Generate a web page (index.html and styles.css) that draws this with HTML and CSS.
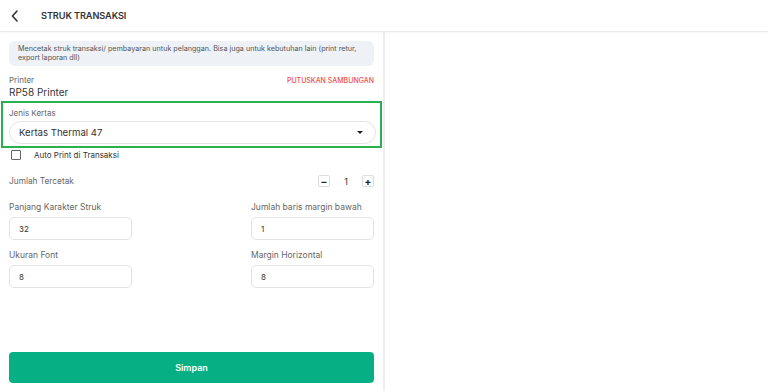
FILE: index.html
```html
<!DOCTYPE html>
<html>
<head>
<meta charset="utf-8">
<link rel="stylesheet" href="styles.css">
</head>
<body>
<header class="header">
  <svg class="back" width="10" height="12" viewBox="0 0 10 12"><path d="M7 1 L2.5 6 L7 11" fill="none" stroke="#333" stroke-width="1.6" stroke-linecap="round" stroke-linejoin="round"/></svg>
  <h1 class="title">STRUK TRANSAKSI</h1>
</header>
<main class="main">
  <section class="panel">
    <div class="info">Mencetak struk transaksi/ pembayaran untuk pelanggan. Bisa juga untuk kebutuhan lain (print retur, export laporan dll)</div>
    <div class="printer">
      <div class="printer-row">
        <span class="label">Printer</span>
        <span class="disconnect">PUTUSKAN SAMBUNGAN</span>
      </div>
      <div class="printer-name">RP58 Printer</div>
    </div>
    <div class="highlight">
      <div class="label">Jenis Kertas</div>
      <div class="select">
        <span>Kertas Thermal 47</span>
        <span class="caret"></span>
      </div>
    </div>
    <label class="check-row">
      <span class="checkbox"></span>
      <span class="check-text">Auto Print di Transaksi</span>
    </label>
    <div class="count-row">
      <span class="label">Jumlah Tercetak</span>
      <div class="stepper">
        <span class="step">&minus;</span>
        <span class="count">1</span>
        <span class="step">+</span>
      </div>
    </div>
    <div class="grid">
      <div class="field">
        <div class="label">Panjang Karakter Struk</div>
        <div class="input">32</div>
      </div>
      <div class="field">
        <div class="label">Jumlah baris margin bawah</div>
        <div class="input">1</div>
      </div>
      <div class="field">
        <div class="label">Ukuran Font</div>
        <div class="input">8</div>
      </div>
      <div class="field">
        <div class="label">Margin Horizontal</div>
        <div class="input">8</div>
      </div>
    </div>
    <button class="save">Simpan</button>
  </section>
  <section class="right"></section>
</main>
</body>
</html>
```
FILE: styles.css
```css
* { box-sizing: border-box; }
html, body { margin: 0; padding: 0; }
body {
  width: 768px;
  height: 391px;
  overflow: hidden;
  background: #fff;
  font-family: "Inter", "Noto Sans", sans-serif;
  color: #333;
}
.header {
  height: 32px;
  display: flex;
  align-items: center;
  border-bottom: 1px solid #ebebeb;
  box-shadow: 0 1px 2px rgba(0,0,0,0.04);
}
.back { margin-left: 10px; }
.title {
  margin: 0 0 0 21px;
  font-size: 9.2px;
  font-weight: 600;
  color: #333;
  letter-spacing: -0.1px;
}
.main { display: flex; height: 359px; }
.panel {
  width: 385px;
  border-right: 2px solid #eeeeee;
  padding: 9px 9px 8px 9px;
  display: flex;
  flex-direction: column;
}
.right { flex: 1; }
.info {
  background: #eef1f5;
  border-radius: 6px;
  padding: 3px 9px 4px;
  font-size: 7.2px;
  line-height: 9px;
  color: #555;
  height: 25px;
}
.printer { margin-top: 8px; }
.printer-row {
  display: flex;
  justify-content: space-between;
  align-items: center;
  height: 12px;
}
.label { font-size: 8px; color: #666; }
.disconnect { font-size: 7px; color: #f04e4e; font-weight: 500; }
.printer-name { font-size: 10px; color: #333; line-height: 12px; }
.highlight {
  margin: 3px -8px 0 -8px;
  border: 2px solid #28b14c;
  padding: 4px 4px 2px 6px;
  height: 47px;
}
.highlight .label { line-height: 12px; }
.select {
  margin-top: 2px;
  height: 23px;
  border: 1px solid #e3e3e3;
  border-radius: 12px;
  display: flex;
  align-items: center;
  justify-content: space-between;
  padding: 0 12px 0 9px;
  font-size: 9.6px;
  color: #333;
}
.caret {
  width: 0; height: 0;
  border-left: 3px solid transparent;
  border-right: 3px solid transparent;
  border-top: 3.5px solid #222;
}
.check-row {
  display: flex;
  align-items: center;
  margin-top: 1px;
  height: 12px;
}
.checkbox {
  width: 10px; height: 10px;
  border: 1px solid #666;
  border-radius: 1px;
  margin-left: 2px;
}
.check-text { font-size: 8px; color: #333; margin-left: 13px; }
.count-row {
  display: flex;
  justify-content: space-between;
  align-items: center;
  margin-top: 13px;
  height: 14px;
}
.count-row .label { font-size: 8.3px; }
.stepper { display: flex; align-items: center; }
.step {
  width: 12px; height: 12px;
  border: 1px solid #ddd;
  border-radius: 2px;
  display: flex; align-items: center; justify-content: center;
  font-size: 10px; font-weight: 700; color: #222;
  line-height: 1;
}
.count { font-size: 9px; width: 32px; text-align: center; color: #333; }
.grid {
  display: grid;
  grid-template-columns: 123px 123px;
  justify-content: space-between;
  row-gap: 9px;
  margin-top: 13px;
}
.field .label { line-height: 12px; height: 12px; font-size: 8.5px; }
.input {
  margin-top: 4px;
  height: 23px;
  border: 1px solid #e3e3e3;
  border-radius: 5px;
  display: flex; align-items: center;
  padding-left: 9px;
  font-size: 8px; color: #333;
}
.save {
  margin-top: auto;
  height: 31px;
  border: none;
  border-radius: 4px;
  background: #07b084;
  color: #fff;
  font-family: inherit;
  font-size: 9px;
  font-weight: 600;
}
```
